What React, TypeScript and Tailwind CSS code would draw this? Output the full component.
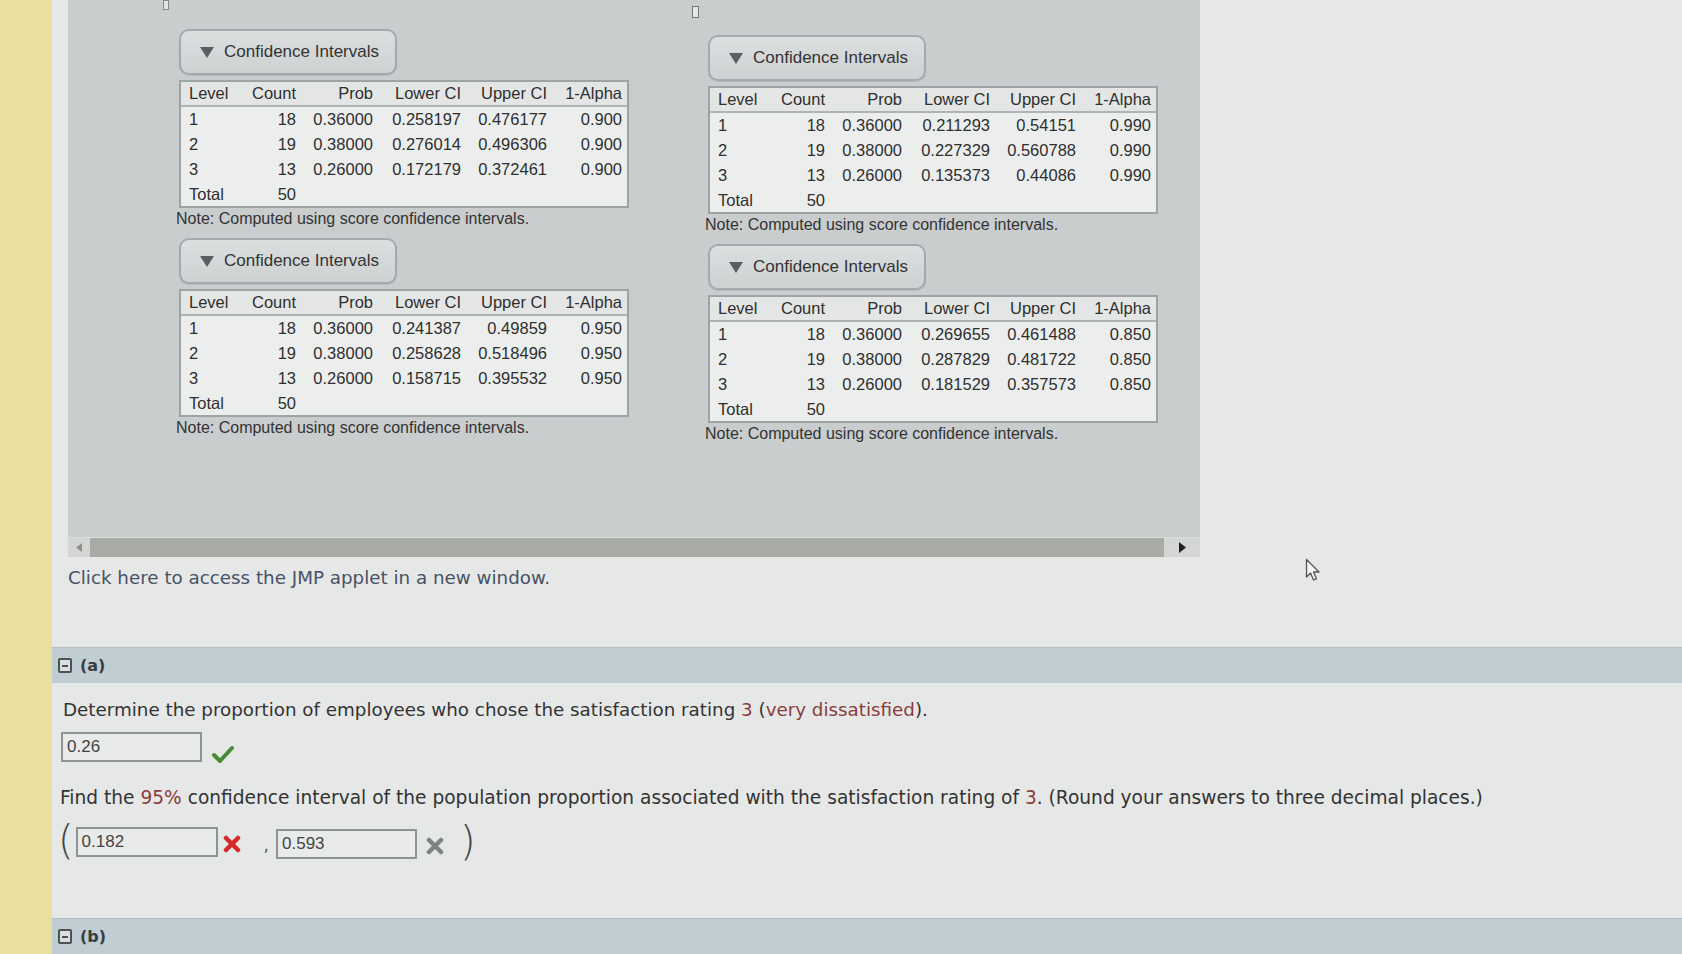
import React from 'react';

type Row = [string, string, string, string, string];

const tables: { alpha: string; rows: Row[] }[][] = [
  [
    {
      alpha: '0.900',
      rows: [
        ['1', '18', '0.36000', '0.258197', '0.476177'],
        ['2', '19', '0.38000', '0.276014', '0.496306'],
        ['3', '13', '0.26000', '0.172179', '0.372461'],
      ],
    },
    {
      alpha: '0.950',
      rows: [
        ['1', '18', '0.36000', '0.241387', '0.49859'],
        ['2', '19', '0.38000', '0.258628', '0.518496'],
        ['3', '13', '0.26000', '0.158715', '0.395532'],
      ],
    },
  ],
  [
    {
      alpha: '0.990',
      rows: [
        ['1', '18', '0.36000', '0.211293', '0.54151'],
        ['2', '19', '0.38000', '0.227329', '0.560788'],
        ['3', '13', '0.26000', '0.135373', '0.44086'],
      ],
    },
    {
      alpha: '0.850',
      rows: [
        ['1', '18', '0.36000', '0.269655', '0.461488'],
        ['2', '19', '0.38000', '0.287829', '0.481722'],
        ['3', '13', '0.26000', '0.181529', '0.357573'],
      ],
    },
  ],
];

const gridCols = 'grid grid-cols-[55px_60px_77px_88px_86px_75px] pr-[5px]';

const CIButton = () => (
  <div className="flex items-center w-[218px] h-[46px] pl-[19px] rounded-[10px] border-2 border-[#a4a9ab] bg-gradient-to-b from-[#dcdfe0] to-[#cdd1d2] shadow-[0_1px_1px_rgba(0,0,0,0.1)]">
    <svg width="14" height="11" viewBox="0 0 14 11" className="shrink-0">
      <path d="M0 0 L14 0 L7 11 Z" fill="#5a5e60" />
    </svg>
    <span className="ml-[10px] text-[17px] text-[#333]">Confidence Intervals</span>
  </div>
);

const CITable = ({ alpha, rows }: { alpha: string; rows: Row[] }) => (
  <div className="w-[450px] border-2 border-[#9ea3a5] bg-[#eceeee] text-[16.5px] text-[#2f2f2f] leading-none">
    <div className={`${gridCols} h-[25px] items-center bg-[#e4e6e6] border-b-2 border-[#aeb3b5]`}>
      <span className="pl-[8px]">Level</span>
      <span className="text-right">Count</span>
      <span className="text-right">Prob</span>
      <span className="text-right">Lower CI</span>
      <span className="text-right">Upper CI</span>
      <span className="text-right">1-Alpha</span>
    </div>
    {rows.map(r => (
      <div key={r[0]} className={`${gridCols} h-[25px] items-center`}>
        <span className="pl-[8px]">{r[0]}</span>
        <span className="text-right">{r[1]}</span>
        <span className="text-right">{r[2]}</span>
        <span className="text-right">{r[3]}</span>
        <span className="text-right">{r[4]}</span>
        <span className="text-right">{alpha}</span>
      </div>
    ))}
    <div className={`${gridCols} h-[24px] items-center`}>
      <span className="pl-[8px]">Total</span>
      <span className="text-right">50</span>
    </div>
  </div>
);

const Report = ({ alpha, rows }: { alpha: string; rows: Row[] }) => (
  <div className="flex flex-col">
    <CIButton />
    <div className="mt-[5px]">
      <CITable alpha={alpha} rows={rows} />
    </div>
    <p className="-ml-[3px] mt-[1px] text-[16px] leading-[19px] text-[#333]">
      Note: Computed using score confidence intervals.
    </p>
  </div>
);

const MinusBox = () => (
  <span className="flex items-center justify-center w-[14px] h-[15px] rounded-[2px] border-2 border-[#4d5154] bg-[#d9dfe1]">
    <span className="w-[6px] h-[2px] bg-[#4d5154]" />
  </span>
);

const Check = () => (
  <svg width="22" height="18" viewBox="0 0 22 18">
    <path d="M2 10 L8 16 L20 3" fill="none" stroke="#4a8a34" strokeWidth="4" strokeLinecap="round" strokeLinejoin="round" />
  </svg>
);

const Cross = ({ color }: { color: string }) => (
  <svg width="18" height="18" viewBox="0 0 18 18">
    <path d="M3 3 L15 15 M15 3 L3 15" stroke={color} strokeWidth="4.5" strokeLinecap="round" />
  </svg>
);

const Field = ({ value, w }: { value: string; w: string }) => (
  <div className={`${w} h-[30px] flex items-center pl-[4px] border-2 border-[#8e9396] bg-[#e9ebeb] font-['Liberation_Sans',Arial,sans-serif] text-[17px] text-[#444]`}>
    {value}
  </div>
);

export default function App() {
  return (
    <div className="flex w-[1682px] h-[954px] overflow-hidden bg-[#e6e8e8] font-['DejaVu_Sans',Verdana,sans-serif]">
      {/* yellow margin */}
      <div className="w-[52px] shrink-0 bg-[#e9df9f]" />

      <div className="relative flex-1 flex flex-col">
        {/* JMP applet */}
        <div className="relative ml-[16px] w-[1132px] h-[558px] flex flex-col bg-[#c9cdce] font-['Liberation_Sans',Arial,sans-serif]">
          <span className="absolute left-[95px] top-0 w-[6px] h-[10px] border border-[#888] bg-[#e5e7e7]" />
          <span className="absolute left-[624px] top-[6px] w-[7px] h-[12px] border border-[#777] bg-[#e5e7e7]" />
          <div className="flex-1 flex gap-[79px] pl-[111px] pt-[29px]">
            <div className="flex flex-col gap-[10px]">
              {tables[0].map(t => (
                <Report key={t.alpha} alpha={t.alpha} rows={t.rows} />
              ))}
            </div>
            <div className="flex flex-col gap-[10px] pt-[6px]">
              {tables[1].map(t => (
                <Report key={t.alpha} alpha={t.alpha} rows={t.rows} />
              ))}
            </div>
          </div>
          {/* horizontal scrollbar */}
          <div className="flex h-[20px] border-t border-[#dcdedd]">
            <div className="w-[22px] flex items-center justify-center bg-[#d4d6d4]">
              <svg width="6" height="9" viewBox="0 0 6 9"><path d="M6 0 L0 4.5 L6 9 Z" fill="#8e9090" /></svg>
            </div>
            <div className="flex-1 bg-[#a9aba7]" />
            <div className="w-[36px] flex items-center justify-center bg-[#d4d6d4]">
              <svg width="7" height="11" viewBox="0 0 7 11"><path d="M0 0 L7 5.5 L0 11 Z" fill="#1f1f1f" /></svg>
            </div>
          </div>
        </div>

        <p className="mt-[9px] pl-[16px] text-[18.3px] leading-[24px] text-[#465265]">
          Click here to access the JMP applet in a new window.
        </p>

        {/* mouse cursor */}
        <svg className="absolute left-[1253px] top-[558px]" width="16" height="24" viewBox="0 0 16 24">
          <path d="M1.5 1.5 L1.5 19 L5.5 15 L8.5 22 L11.5 20.8 L8.5 14 L14 14 Z" fill="#f4f4f4" stroke="#555" strokeWidth="1.3" strokeLinejoin="round" />
        </svg>

        {/* part (a) */}
        <div className="mt-[57px] h-[36px] flex items-center gap-[8px] pl-[6px] bg-[#c0cdd2] border-t border-[#b1bfc4]">
          <MinusBox />
          <span className="text-[16px] font-bold text-[#3a3d40]">(a)</span>
        </div>

        <p className="mt-[15px] pl-[11px] text-[18.3px] leading-[24px] text-[#333]">
          Determine the proportion of employees who chose the satisfaction rating <span className="text-[#8a3c3c]">3</span> (<span className="text-[#8a3c3c]">very dissatisfied</span>).
        </p>

        <div className="mt-[9px] ml-[9px] flex items-center gap-[10px]">
          <Field value="0.26" w="w-[141px]" />
          <div className="mt-[14px]"><Check /></div>
        </div>

        <p className="mt-[23px] pl-[8px] text-[18.6px] leading-[24px] text-[#333]">
          Find the <span className="text-[#8a3c3c]">95%</span> confidence interval of the population proportion associated with the satisfaction rating of <span className="text-[#8a3c3c]">3</span>. (Round your answers to three decimal places.)
        </p>

        <div className="mt-[14px] ml-[6px] h-[36px] flex items-center">
          <span className="text-[40px] leading-none font-extralight text-[#444] -mt-[4px]">(</span>
          <div className="ml-[2px]"><Field value="0.182" w="w-[142px]" /></div>
          <div className="ml-[5px] mt-[4px]"><Cross color="#d42a2a" /></div>
          <span className="ml-[23px] mt-[8px] text-[17px] text-[#555]">,</span>
          <div className="ml-[7px] mt-[4px]"><Field value="0.593" w="w-[141px]" /></div>
          <div className="ml-[9px] mt-[8px]"><Cross color="#7f8283" /></div>
          <span className="ml-[16px] text-[40px] leading-none font-extralight text-[#444] -mt-[2px]">)</span>
        </div>

        {/* part (b) */}
        <div className="mt-[58px] h-[36px] flex items-center gap-[8px] pl-[6px] bg-[#c0cdd2] border-t border-[#b1bfc4]">
          <MinusBox />
          <span className="text-[16px] font-bold text-[#3a3d40]">(b)</span>
        </div>
      </div>
    </div>
  );
}
